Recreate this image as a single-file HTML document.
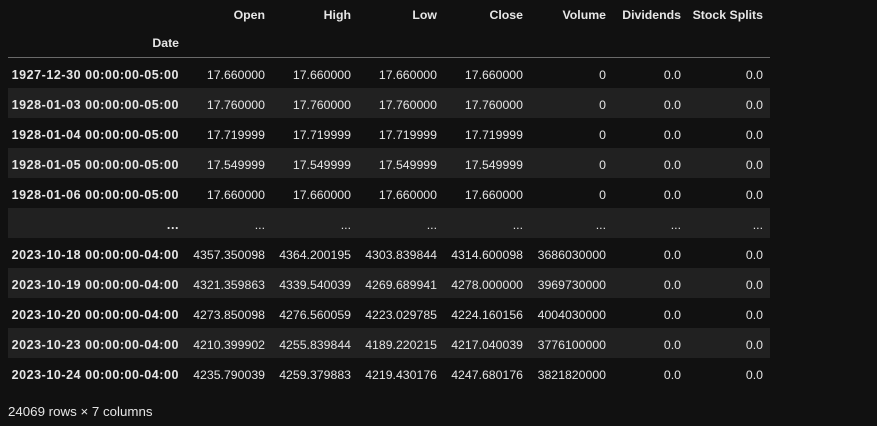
<!DOCTYPE html><html><head><style>
body{margin:0;background:#111;width:877px;height:426px;overflow:hidden;font-family:"Liberation Sans",sans-serif;font-size:12.3px;color:#e6e6e6;position:relative}
.r{position:absolute;left:8px;width:762px;height:30px}
.s{background:#212121}
.c{position:absolute;top:2px;line-height:30px;text-align:right;white-space:nowrap}
.b{font-weight:bold;letter-spacing:0.55px;font-size:12.5px}
.h .c{top:0}
.h{font-weight:bold}
</style></head><body>
<div id="t"></div>
<div style="position:absolute;left:8px;top:57px;width:762px;height:1px;background:#6a6a6a"></div>
<div style="position:absolute;left:8px;top:404px;font-size:13.3px">24069 rows × 7 columns</div>
<script>
var R=[179,265,351,437,523,606,681,763];
var h='';
function row(top,cells,cls,bold0){
 var s='<div class="r '+cls+'" style="top:'+top+'px">';
 cells.forEach(function(t,i){ if(t===null)return;
  s+='<div class="c '+((i==0&&bold0)?'b':'')+'" style="right:'+(770-R[i])+'px">'+t+'</div>';});
 return s+'</div>';
}
h+=row(0,[null,'Open','High','Low','Close','Volume','Dividends','Stock Splits'],'h');
h+=row(28,['Date'],'h');
var d=[
['1927-12-30 00:00:00-05:00','17.660000','17.660000','17.660000','17.660000','0','0.0','0.0'],
['1928-01-03 00:00:00-05:00','17.760000','17.760000','17.760000','17.760000','0','0.0','0.0'],
['1928-01-04 00:00:00-05:00','17.719999','17.719999','17.719999','17.719999','0','0.0','0.0'],
['1928-01-05 00:00:00-05:00','17.549999','17.549999','17.549999','17.549999','0','0.0','0.0'],
['1928-01-06 00:00:00-05:00','17.660000','17.660000','17.660000','17.660000','0','0.0','0.0'],
['...','...','...','...','...','...','...','...'],
['2023-10-18 00:00:00-04:00','4357.350098','4364.200195','4303.839844','4314.600098','3686030000','0.0','0.0'],
['2023-10-19 00:00:00-04:00','4321.359863','4339.540039','4269.689941','4278.000000','3969730000','0.0','0.0'],
['2023-10-20 00:00:00-04:00','4273.850098','4276.560059','4223.029785','4224.160156','4004030000','0.0','0.0'],
['2023-10-23 00:00:00-04:00','4210.399902','4255.839844','4189.220215','4217.040039','3776100000','0.0','0.0'],
['2023-10-24 00:00:00-04:00','4235.790039','4259.379883','4219.430176','4247.680176','3821820000','0.0','0.0']];
d.forEach(function(r,i){h+=row(58+30*i,r,i%2?'s':'',true);});
document.getElementById('t').innerHTML=h;
</script>
</body></html>
